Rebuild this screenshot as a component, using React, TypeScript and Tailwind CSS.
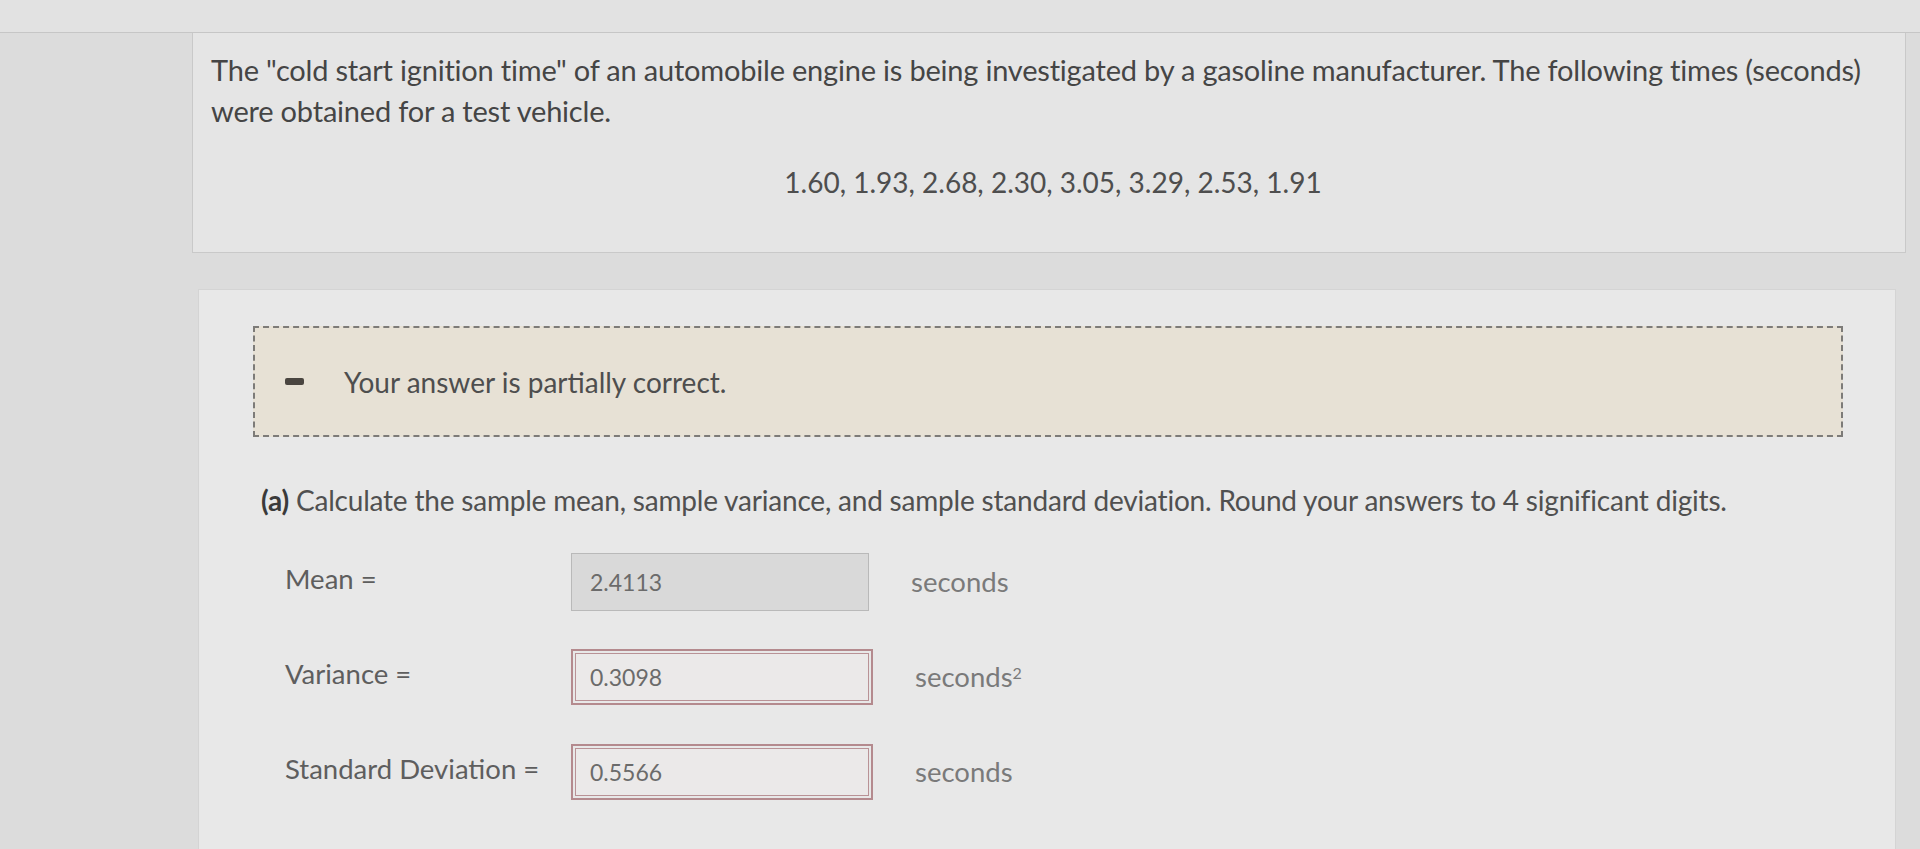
import React from "react";

const font = { fontFamily: "Lato, 'Noto Sans', sans-serif" };

const AnswerRow: React.FC<{
  label: string;
  value: string;
  unit: React.ReactNode;
  marked?: boolean;
}> = ({ label, value, unit, marked }) => (
  <div className="flex items-center h-[58px]">
    <div className="w-[286px] text-[27.5px] text-[#5e5e5e] -mt-[6px]">{label}</div>
    {marked ? (
      <div className="w-[302px] h-[56px] border-2 border-[#b48a8e] p-[2px]">
        <div className="h-full border border-[#b99296] bg-[#ebe9e9] flex items-center pl-[14px] text-[23px] text-[#6b6b6b]">
          {value}
        </div>
      </div>
    ) : (
      <div className="w-[298px] h-[58px] border border-[#b9b9b9] bg-[#d9d9d9] flex items-center pl-[18px] text-[23px] text-[#6b6b6b]">
        {value}
      </div>
    )}
    <div className="ml-[42px] text-[27.5px] text-[#7a7a7a]">{unit}</div>
  </div>
);

export default function App() {
  return (
    <div
      className="w-full h-[849px] overflow-hidden bg-[#dcdcdc]"
      style={font}
    >
      <div className="h-[33px] bg-[#e2e2e2] border-b border-[#c6c6c6]" />
      <div className="ml-[192px] mr-[14px] h-[220px] border border-t-0 border-[#c9c9c9] bg-[#e5e5e5] pt-[16px] pl-[18px] pr-[10px]">
        <p className="text-[29px] leading-[41px] text-[#454545] tracking-[-0.2px]">
          The "cold start ignition time" of an automobile engine is being
          investigated by a gasoline manufacturer. The following times (seconds)
          were obtained for a test vehicle.
        </p>
        <p className="mt-[30px] text-center text-[28px] text-[#4e4e4e]">
          1.60, 1.93, 2.68, 2.30, 3.05, 3.29, 2.53, 1.91
        </p>
      </div>
      <div className="mt-[36px] ml-[198px] mr-[24px] h-[600px] border border-[#d4d4d4] bg-[#e8e8e8] pt-[36px] pl-[54px] pr-[52px]">
        <div className="h-[111px] border-2 border-dashed border-[#7d7b78] bg-[#e7e1d5] flex items-center pl-[30px]">
          <div className="w-[19px] h-[7px] rounded-[2px] bg-[#4a4540]" />
          <span className="ml-[40px] text-[28px] text-[#4e4e4e]">
            Your answer is partially correct.
          </span>
        </div>
        <p className="mt-[42px] ml-[8px] text-[28px] text-[#505050] tracking-[-0.2px]">
          <span className="font-bold text-[#3a3a3a]">(a)</span> Calculate the
          sample mean, sample variance, and sample standard deviation. Round
          your answers to 4 significant digits.
        </p>
        <div className="mt-[32px] ml-[32px] flex flex-col gap-[37px]">
          <AnswerRow label="Mean =" value="2.4113" unit="seconds" />
          <AnswerRow
            label="Variance ="
            value="0.3098"
            marked
            unit={
              <span>
                seconds<sup className="text-[16px]">2</sup>
              </span>
            }
          />
          <AnswerRow
            label="Standard Deviation ="
            value="0.5566"
            marked
            unit="seconds"
          />
        </div>
      </div>
    </div>
  );
}
